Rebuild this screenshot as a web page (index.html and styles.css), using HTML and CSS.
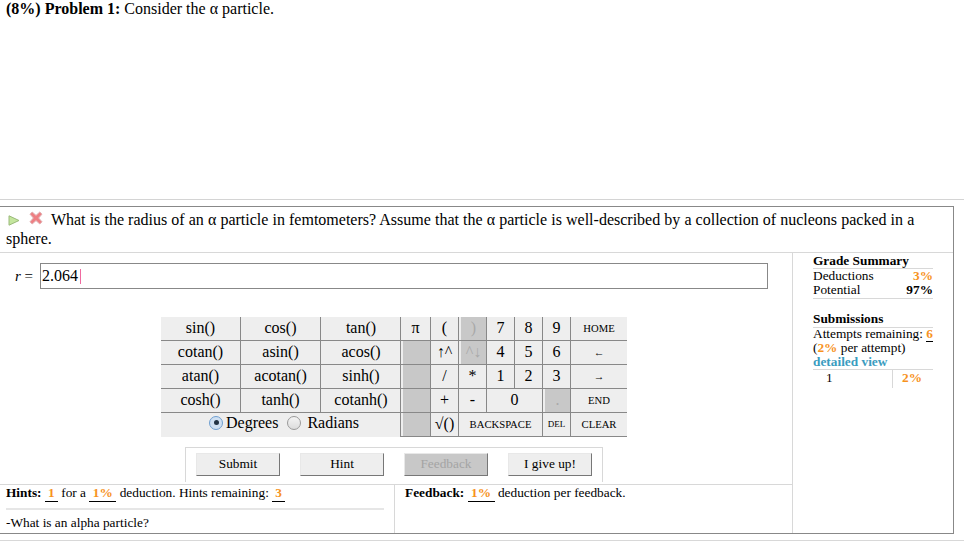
FILE: index.html
```html
<!DOCTYPE html>
<html lang="en">
<head>
<meta charset="utf-8">
<title>Problem 1</title>
<link rel="stylesheet" href="styles.css">
</head>
<body>
<header class="problem-head"><b>(8%) Problem 1:</b> Consider the α particle.</header>
<section class="box">
  <div class="question">
    <svg class="icon-play" viewBox="0 0 12 11" width="12" height="11"><path d="M1 .8 11 5.5 1 10.2Z" fill="#c4e69e" stroke="#9ab97a" stroke-width="1"/></svg>
    <svg class="icon-x" viewBox="0 0 14 14" width="14" height="14"><path d="M3.2 1 7 4.4 10.8 1 13 3.2 9.6 7 13 10.8 10.8 13 7 9.6 3.2 13 1 10.8 4.4 7 1 3.2Z" fill="#ee7f83" stroke="#e0b0b2" stroke-width="1" stroke-linejoin="round"/></svg>
    What is the radius of an α particle in femtometers? Assume that the α particle is well-described by a collection of nucleons packed in a sphere.
  </div>
  <div class="main">
    <div class="work">
      <div class="answer-row">
        <span class="var"><i>r</i> =</span>
        <div class="answer">2.064<span class="caret"></span></div>
      </div>
      <div class="calc">
        <div class="funcs">
          <div class="key">sin()</div><div class="key">cos()</div><div class="key">tan()</div>
          <div class="key">cotan()</div><div class="key">asin()</div><div class="key">acos()</div>
          <div class="key">atan()</div><div class="key">acotan()</div><div class="key">sinh()</div>
          <div class="key">cosh()</div><div class="key">tanh()</div><div class="key">cotanh()</div>
          <div class="modes">
            <span class="radio on"></span><span class="mode-label">Degrees</span>
            <span class="radio"></span><span>Radians</span>
          </div>
        </div>
        <div class="pad">
          <div class="key">π</div><div class="key">(</div><div class="key off">)</div><div class="key">7</div><div class="key">8</div><div class="key">9</div><div class="key small">HOME</div>
          <div class="key off"></div><div class="key">↑^</div><div class="key off">^↓</div><div class="key">4</div><div class="key">5</div><div class="key">6</div><div class="key small">←</div>
          <div class="key off"></div><div class="key">/</div><div class="key">*</div><div class="key">1</div><div class="key">2</div><div class="key">3</div><div class="key small">→</div>
          <div class="key off"></div><div class="key">+</div><div class="key">-</div><div class="key span2">0</div><div class="key off">.</div><div class="key small">END</div>
          <div class="key off"></div><div class="key">√()</div><div class="key small span3">BACKSPACE</div><div class="key tiny">DEL</div><div class="key small">CLEAR</div>
        </div>
      </div>
      <div class="actions">
        <button class="btn" type="button">Submit</button>
        <button class="btn" type="button">Hint</button>
        <button class="btn disabled" type="button">Feedback</button>
        <button class="btn" type="button">I give up!</button>
      </div>
      <div class="info">
        <div class="hints">
          <div class="hints-line"><b>Hints:</b> <span class="blank">1</span> for a <span class="blank wide">1%</span> deduction. Hints remaining: <span class="blank">3</span></div>
          <div class="hint-text">-What is an alpha particle?</div>
        </div>
        <div class="feedback"><b>Feedback:</b> <span class="blank wide">1%</span> deduction per feedback.</div>
      </div>
    </div>
    <aside class="side">
      <h4 class="side-title">Grade Summary</h4>
      <div class="summary">
        <div class="sum-row"><span>Deductions</span><b class="orange">3%</b></div>
        <div class="sum-row"><span>Potential</span><b>97%</b></div>
      </div>
      <h4 class="side-title second">Submissions</h4>
      <div class="subs">
        <div class="attempts"><span>Attempts remaining:</span><b class="orange under">6</b></div>
        <div>(<b class="orange">2%</b> per attempt)</div>
        <div class="link">detailed view</div>
      </div>
      <div class="sub-row"><span class="sub-n">1</span><b class="sub-v orange">2%</b></div>
    </aside>
  </div>
</section>
<div class="foot-rule"></div>
</body>
</html>
```
FILE: styles.css
```css
* { box-sizing: border-box; }
html, body { margin: 0; padding: 0; background: #fff; }
body { width: 964px; height: 542px; overflow: hidden; font-family: "Liberation Serif", "Times New Roman", serif; color: #000; }
.problem-head { height: 206px; padding: 1px 0 0 6px; font-size: 16px; line-height: 16px; }
.problem-head::after { content: ""; display: block; margin: 182px 0 0 -6px; height: 1px; background: #d4d4d4; }
.box { width: 954px; height: 328px; border: 1px solid #888; border-left: 0; }
.question { height: 46px; padding: 3px 6px 0; font-size: 16px; line-height: 19px; word-spacing: 0.1px; border-bottom: 1px solid #d8d8d8; }
.icon-play { margin: 0 5px 0 2px; vertical-align: -1px; }
.icon-x { margin-right: 4px; vertical-align: 0; }
.main { display: flex; height: 280px; }
.work { width: 793px; border-right: 1px solid #d8d8d8; display: flex; flex-direction: column; }
.answer-row { display: flex; align-items: center; height: 26px; margin: 10px 0 0 15px; }
.var { width: 25px; font-size: 15px; }
.answer { width: 728px; height: 26px; border: 1px solid #888; padding: 0 0 2px 1px; font-size: 16px; line-height: 21px; display: flex; align-items: center; }
.caret { display: inline-block; width: 1px; height: 15px; background: #f06aa0; margin: 2px 0 0 2px; }
.calc { display: flex; margin: 28px 0 0 161px; height: 120px; }
.funcs { display: grid; grid-template-columns: 79px 79px 80px; grid-auto-rows: 23px; gap: 1px; background: #888; width: 239px; height: 120px; }
.key { background: #eee; display: flex; align-items: center; justify-content: center; padding-bottom: 2px; font-size: 16px; }
.modes { grid-column: 1 / 4; background: #eee; height: 24px; padding: 0 0 5px 6px; display: flex; align-items: center; justify-content: center; font-size: 16px; }
.radio { width: 14px; height: 14px; border-radius: 50%; border: 1px solid #9a9a9a; background: linear-gradient(#f4f4f4, #dcdcdc); margin-right: 6px; display: flex; align-items: center; justify-content: center; }
.radio.on { border-color: #6f9fd0; background: #cfe0f2; margin-right: 3px; }
.radio.on::after { content: ""; width: 5px; height: 5px; border-radius: 50%; background: #234; }
.mode-label { margin-right: 9px; }
.pad { display: grid; grid-template-columns: 29px repeat(5, 27px) 56px; grid-auto-rows: 23px; gap: 1px; background: #888; padding: 0 0 1px 1px; width: 227px; height: 120px; }
.off { background: #c8c8c8; color: #a8a8a8; border: 1px solid #eee; border-width: 0 0 0 2px; }
.small { font-size: 10.67px; }
.tiny { font-size: 9px; }
.span2 { grid-column: span 2; }
.span3 { grid-column: span 3; }
.actions { display: flex; margin: 10px 0 0 185px; width: 418px; height: 35px; border: 1px solid #d8d8d8; border-bottom: 0; padding: 5px 0 0 10px; gap: 20px; align-items: flex-start; }
.btn { width: 84px; height: 23px; padding: 0 0 2px; background: #eee; border: 1px solid; border-color: #e8e8e8 #777 #777 #e8e8e8; font: 13.33px "Liberation Serif", serif; color: #000; }
.btn.disabled { background: #c8c8c8; color: #a4a4a4; }
.info { display: flex; flex: 1; margin-top: 2px; border-top: 1px solid #d8d8d8; font-size: 13.33px; }
.hints { width: 395px; padding: 0 10px 0 6px; border-right: 1px solid #d8d8d8; }
.hints-line { height: 25px; line-height: 16px; border-bottom: 2px solid #e6e6e6; white-space: nowrap; }
.hint-text { margin-top: 5px; line-height: 16px; }
.feedback { padding-left: 10px; line-height: 16px; }
.blank { display: inline-block; min-width: 13px; padding: 0 2px 2px; text-align: center; line-height: 13px; color: #f7931e; font-weight: bold; border-bottom: 1px solid #000; }
.blank.wide { min-width: 27px; }
.side { flex: 1; padding: 0 20px 0 20px; font-size: 13.33px; line-height: 14px; }
.side-title { margin: 0; height: 16px; font-size: 13.33px; line-height: 15px; border-bottom: 1px solid #d8d8d8; }
.side-title.second { margin-top: 13px; line-height: 13px; }
.summary { height: 30px; border-bottom: 1px solid #d8d8d8; }
.sum-row { display: flex; justify-content: space-between; }
.orange { color: #f7931e; font-weight: bold; }
.under { border-bottom: 1px solid #000; height: 15px; }
.subs { height: 43px; border-bottom: 1px solid #d8d8d8; line-height: 13.5px; }
.attempts { display: flex; justify-content: space-between; white-space: pre; height: 14px; margin-top: -1px; }
.link { color: #3a9cc0; font-weight: bold; }
.sub-row { display: flex; height: 18px; line-height: 16px; }
.sub-n { width: 80px; padding-left: 13px; border-right: 1px solid #d8d8d8; }
.sub-v { padding-left: 9px; }
.foot-rule { height: 1px; margin-top: 6px; background: #d8d8d8; }
```
